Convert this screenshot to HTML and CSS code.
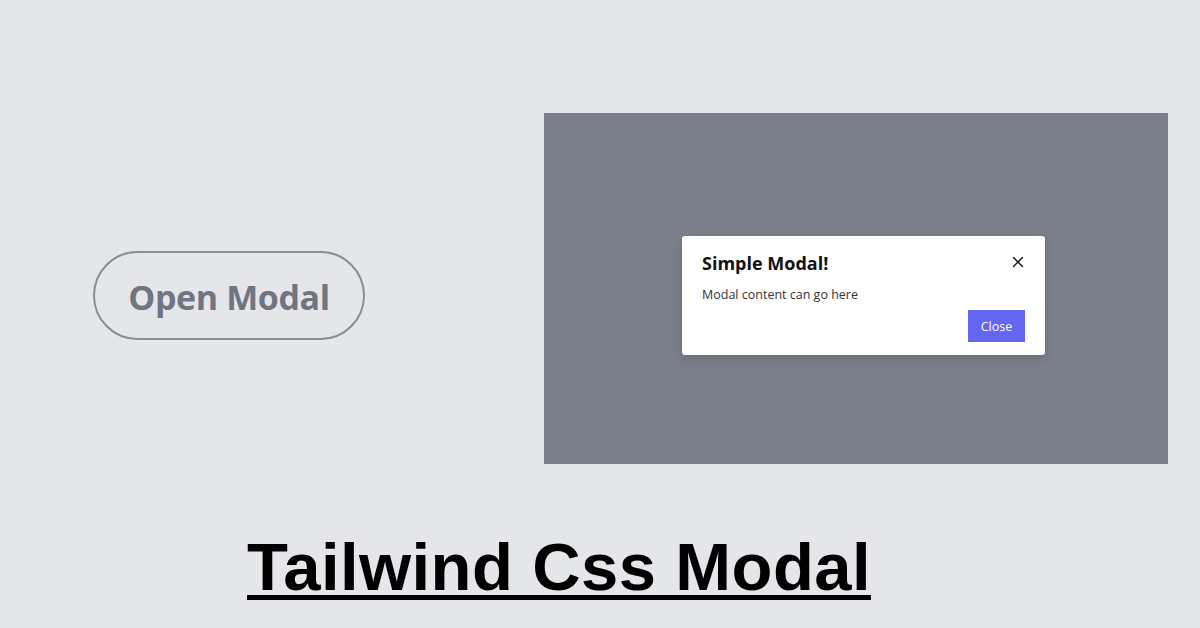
FILE: index.html
```html
<!DOCTYPE html>
<html lang="en">
<head>
    <meta charset="UTF-8">
    <title>Tailwind Css Modal</title>
    <link rel="stylesheet" href="styles.css">
</head>
<body>
    <div class="stage">
        <div class="left">
            <button class="open-btn">Open Modal</button>
        </div>
        <div class="preview">
            <div class="modal">
                <div class="modal-head">
                    <h3>Simple Modal!</h3>
                    <span class="close-x">
                        <svg width="12" height="12" viewBox="0 0 12 12">
                            <path d="M1.5 1.5 L10.5 10.5 M10.5 1.5 L1.5 10.5" stroke="#111" stroke-width="1.4" stroke-linecap="round"/>
                        </svg>
                    </span>
                </div>
                <p class="modal-text">Modal content can go here</p>
                <div class="modal-foot">
                    <button class="close-btn">Close</button>
                </div>
            </div>
        </div>
    </div>
    <h1 class="title">Tailwind Css Modal</h1>
</body>
</html>
```

FILE: styles.css
```css
body{
    margin: 0;
    background-color: #E5E6EA;
    font-family: "Open Sans", "Noto Sans", sans-serif;
}
.stage{
    display: grid;
    grid-template-columns: 544px 624px;
    padding-top: 113px;
}
.left{
    padding-left: 93px;
    padding-top: 138px;
}
.open-btn{
    width: 272px;
    height: 89px;
    border: 2px solid #8A8D96;
    border-radius: 45px;
    background: transparent;
    color: #71757F;
    font-family: "Open Sans", sans-serif;
    font-weight: bold;
    font-size: 34px;
    letter-spacing: -0.4px;
    padding: 2px 0 0 0;
}
.preview{
    background-color: #7B7F89;
    height: 351px;
    padding-left: 138px;
    padding-top: 123px;
    box-sizing: border-box;
}
.modal{
    width: 363px;
    height: 119px;
    box-sizing: border-box;
    background: #fff;
    border-radius: 3px;
    padding: 15px 20px 13px 20px;
    box-shadow: 0 4px 10px rgba(0,0,0,0.15);
}
.modal-head{
    display: flex;
    justify-content: space-between;
    align-items: center;
}
.modal-head h3{
    margin: 0;
    font-size: 18px;
    font-weight: bold;
    color: #111;
    line-height: 24px;
}
.close-x{
    display: flex;
    margin-right: 1px;
    margin-top: -2px;
}
.modal-text{
    margin: 12px 0 0 0;
    font-size: 12.5px;
    color: #333;
    line-height: 16px;
}
.modal-foot{
    display: flex;
    justify-content: flex-end;
    margin-top: 7px;
}
.close-btn{
    width: 57px;
    height: 32px;
    border: none;
    background-color: #6366F1;
    color: #fff;
    font-family: "Open Sans", sans-serif;
    font-size: 12.5px;
    padding: 0;
}
.title{
    margin: 69px 0 0 247px;
    display: inline-block;
    font-family: "Liberation Sans", Arial, sans-serif;
    font-weight: bold;
    font-size: 67px;
    line-height: 67px;
    letter-spacing: 0.4px;
    color: #000;
    text-decoration: underline;
    text-decoration-thickness: 5px;
    text-underline-offset: 5px;
}
```
